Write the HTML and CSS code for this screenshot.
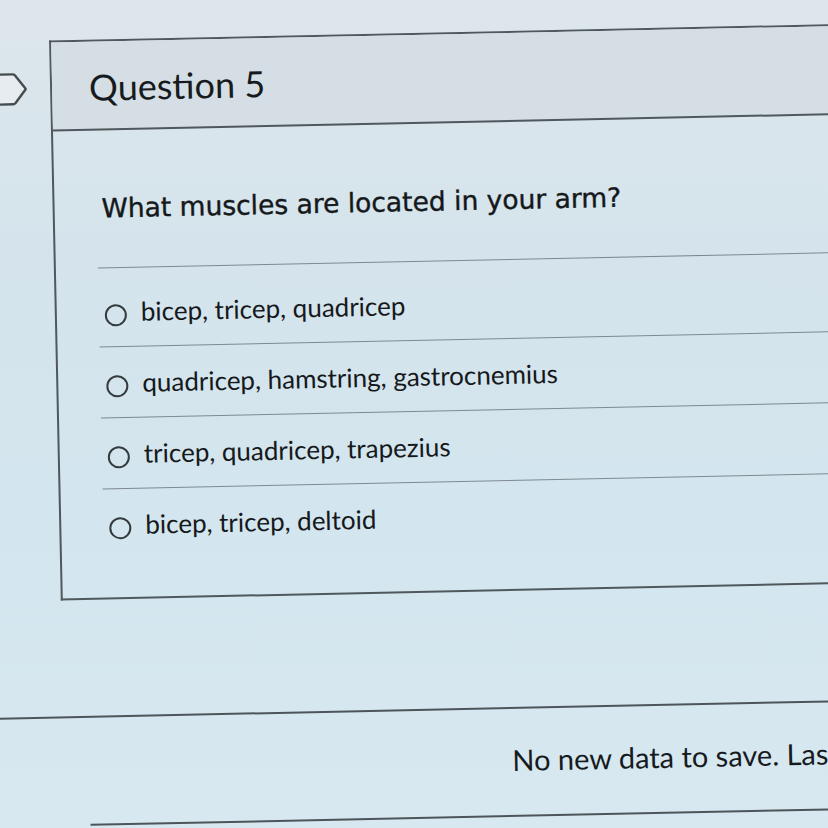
FILE: index.html
```html
<!DOCTYPE html>
<html lang="en">
<head>
<meta charset="utf-8">
<title>Question 5</title>
<link rel="stylesheet" href="styles.css">
</head>
<body>
<div class="page">
  <div class="quiz-row">
    <div class="gutter">
      <svg class="flag" width="44" height="34" viewBox="0 0 44 34" aria-hidden="true">
        <path d="M-6 2 H27 Q28 2 29 3 L39 16 Q40 17 39 18 L29 31 Q28 32 27 32 H-6 Z" fill="#e6ecef" stroke="#454c4f" stroke-width="2.4" stroke-linejoin="round"/>
      </svg>
    </div>
    <section class="card">
      <header class="card-head">
        <h2 class="card-title">Question 5</h2>
      </header>
      <div class="card-body">
        <div class="question-box">
          <p class="question">What muscles are located in your arm?</p>
        </div>
        <ul class="answers">
          <li class="answer"><span class="radio"></span><span class="label">bicep, tricep, quadricep</span></li>
          <li class="answer"><span class="radio"></span><span class="label">quadricep, hamstring, gastrocnemius</span></li>
          <li class="answer"><span class="radio"></span><span class="label">tricep, quadricep, trapezius</span></li>
          <li class="answer"><span class="radio"></span><span class="label">bicep, tricep, deltoid</span></li>
        </ul>
      </div>
    </section>
  </div>
  <footer class="status-bar">
    <p class="status">No new data to save. Last checked at 10:42am</p>
  </footer>
  <div class="actions"></div>
</div>
</body>
</html>
```

FILE: styles.css
```css
html, body {
  margin: 0;
  padding: 0;
}

body {
  width: 828px;
  height: 828px;
  overflow: hidden;
  background: linear-gradient(to bottom, #dde6eb 0%, #d5e4ec 30%, #d3e5ee 60%, #d7e8f0 100%);
  font-family: Lato, "Liberation Sans", sans-serif;
  color: #1e2326;
}

.page {
  width: 1000px;
  margin-left: -40px;
  padding-top: 33px;
  transform: rotate(-1.2deg);
  transform-origin: 454px 414px;
}

.quiz-row {
  display: flex;
  align-items: flex-start;
}

.gutter {
  width: 97px;
  flex: 0 0 97px;
  display: flex;
  justify-content: flex-end;
  padding-top: 31px;
}

.flag {
  display: block;
  margin-right: 20px;
  overflow: visible;
}

.card {
  flex: 0 0 880px;
  border: 2px solid #4f585c;
  border-right: none;
}

.card-head {
  height: 87px;
  display: flex;
  align-items: center;
  padding-left: 37px;
  background: #d4dee4;
  border-bottom: 2px solid #4f585c;
}

.card-title {
  margin: 0;
  font-family: Lato, sans-serif;
  font-weight: 400;
  font-size: 36px;
  line-height: 40px;
  color: #171b1d;
  padding-top: 2px;
}

.card-body {
  padding-bottom: 38px;
}

.question-box {
  margin-left: 42px;
  padding: 63px 0 44px 5px;
  border-bottom: 1px solid #7d8a90;
}

.question {
  margin: 0;
  font-family: "DejaVu Sans", sans-serif;
  font-size: 26.5px;
  line-height: 30px;
  color: #15181a;
  -webkit-text-stroke: 0.4px #15181a;
}

.answers {
  list-style: none;
  margin: 0 0 0 42px;
  padding: 8px 0 0 0;
}

.answer {
  height: 70px;
  display: flex;
  align-items: center;
  padding-left: 6px;
  border-bottom: 1px solid #7d8a90;
}

.answer:last-child {
  border-bottom: none;
}

.radio {
  width: 18px;
  height: 18px;
  border: 2px solid #343c3f;
  border-radius: 50%;
  margin-top: 8px;
  margin-right: 14px;
  flex: 0 0 auto;
}

.label {
  font-family: Lato, sans-serif;
  font-size: 26px;
  line-height: 31px;
  color: #16191b;
}

.status-bar {
  margin-top: 116px;
  border-top: 2px solid #4c5559;
  padding: 33px 0 38px 545px;
}

.status {
  margin: 0;
  white-space: nowrap;
  font-family: Lato, sans-serif;
  font-size: 29px;
  line-height: 35px;
  color: #171b1d;
}

.actions {
  margin-left: 122px;
  height: 40px;
  border-top: 2px solid #4c5559;
}
```
